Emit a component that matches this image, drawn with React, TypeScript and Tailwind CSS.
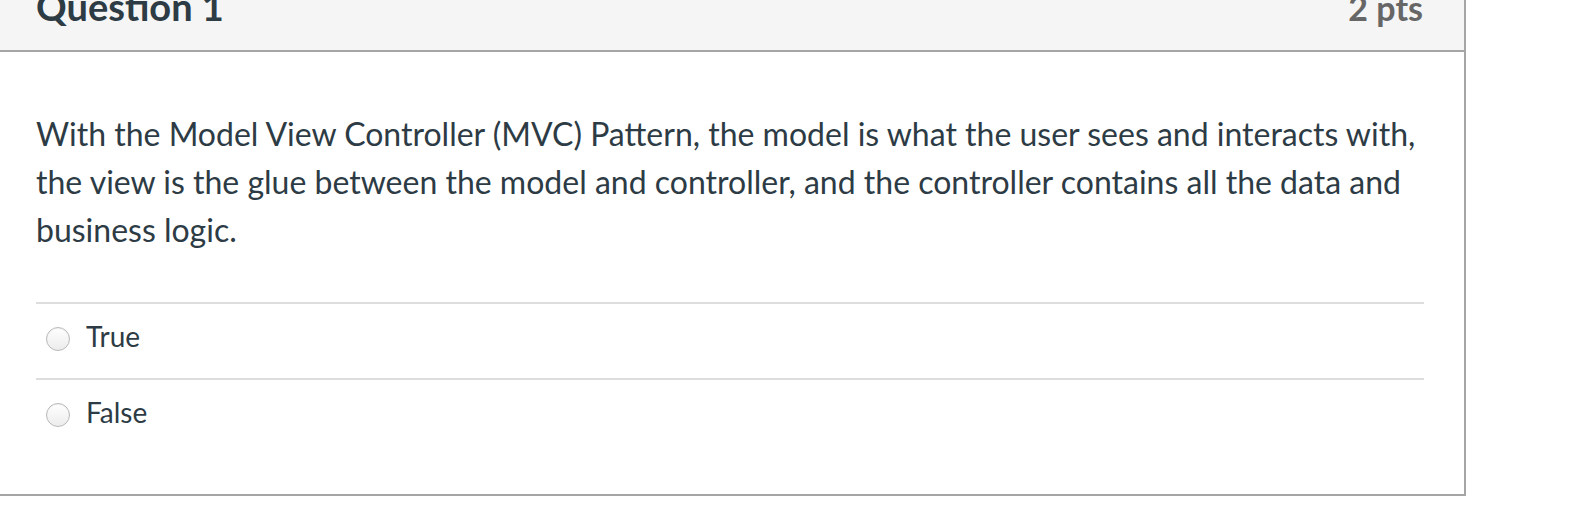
import React from 'react'

const options = ['True', 'False']

function Radio() {
  return (
    <span className="block h-[24px] w-[24px] shrink-0 rounded-full border border-[#b9b9b9] bg-gradient-to-b from-[#ffffff] to-[#ececec] shadow-[inset_0_1px_1px_rgba(0,0,0,0.06)]" />
  )
}

export default function App() {
  return (
    <div className="min-h-[528px] bg-white font-['Lato','Liberation_Sans',sans-serif] text-[#2d3b45]">
      <div className="-mt-[40px] w-[1466px] border-r-2 border-b-2 border-[#a5a5a5] bg-white">
        {/* Header */}
        <div className="flex h-[92px] items-start justify-between border-b-2 border-[#a5a5a5] bg-[#f5f5f5] pl-[36px] pr-[41px] pt-[27px]">
          <h2 className="text-[38px] font-bold leading-[38px]">Question 1</h2>
          <div className="mt-[2px] text-[34px] font-bold leading-[38px] text-[#666666]">2 pts</div>
        </div>

        {/* Body */}
        <div className="pl-[36px] pr-[40px] pt-[58px] pb-[40px]">
          <p className="text-[32px] leading-[48px]">
            With the Model View Controller (MVC) Pattern, the model is what the user sees and interacts with,
            the view is the glue between the model and controller, and the controller contains all the data and
            business logic.
          </p>

          <div className="mt-[48px]">
            {options.map((opt) => (
              <div
                key={opt}
                className="flex h-[76px] items-center gap-[16px] border-t-2 border-[#dddddd] pb-[4px] pl-[10px]"
              >
                <Radio />
                <span className="mb-[6px] text-[28px] leading-[32px]">{opt}</span>
              </div>
            ))}
          </div>
        </div>
      </div>
    </div>
  )
}
